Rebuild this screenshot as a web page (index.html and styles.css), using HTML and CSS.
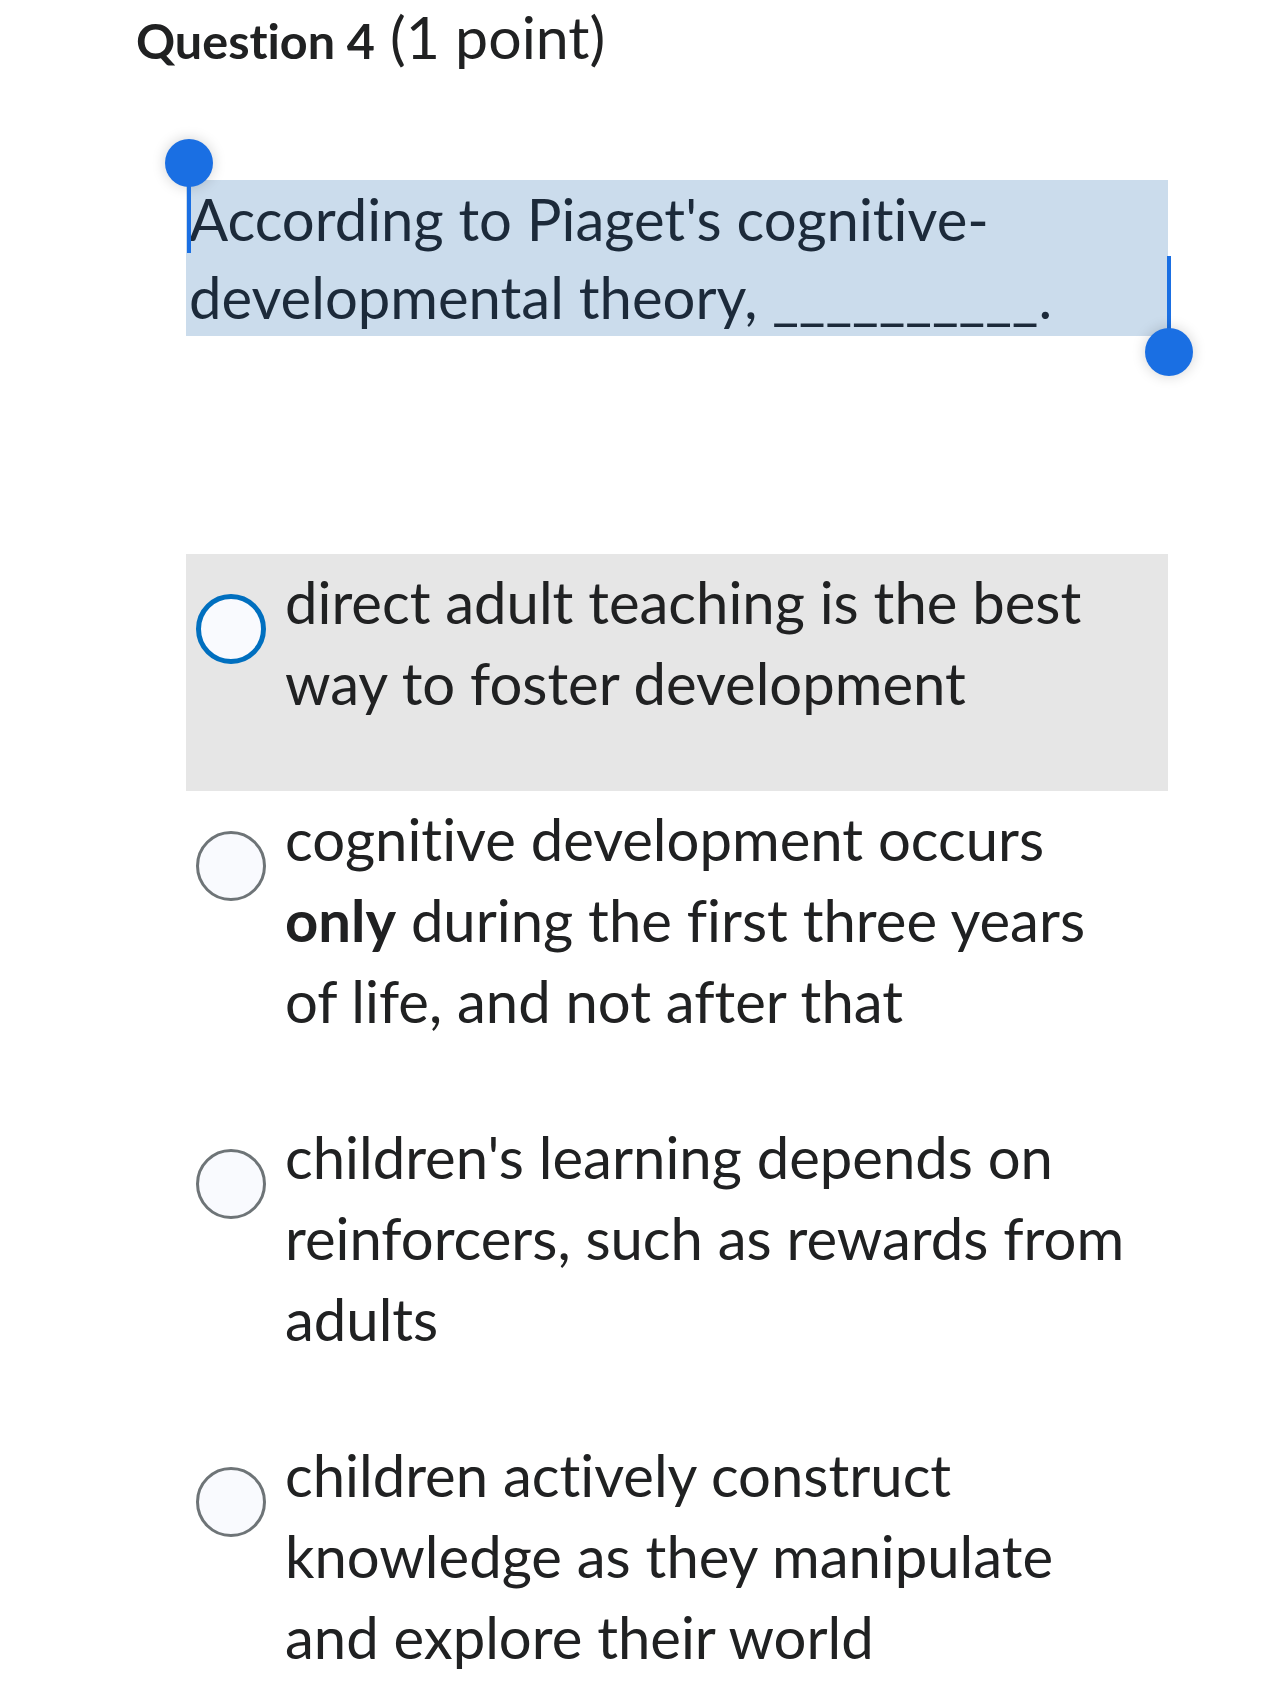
FILE: index.html
```html
<!DOCTYPE html>
<html lang="en">
<head>
<meta charset="utf-8">
<title>Question 4</title>
<link rel="stylesheet" href="styles.css">
</head>
<body>
<div class="page">
  <h1 class="q-title"><span class="q-num">Question 4</span> <span class="q-pts">(1 point)</span></h1>
  <div class="q-body">
    <p class="q-text">According to Piaget's cognitive-developmental theory, __________.</p>
    <span class="handle handle-start"><span class="knob"></span><span class="stem"></span></span>
    <span class="handle handle-end"><span class="stem"></span><span class="knob"></span></span>
  </div>
  <div class="options">
    <label class="option option-hover">
      <span class="radio radio-focus"></span>
      <span class="opt-text">direct adult teaching is the best way to foster development</span>
    </label>
    <label class="option">
      <span class="radio"></span>
      <span class="opt-text">cognitive development occurs <strong>only</strong> during the first three years of life, and not after that</span>
    </label>
    <label class="option">
      <span class="radio"></span>
      <span class="opt-text">children's learning depends on reinforcers, such as rewards from adults</span>
    </label>
    <label class="option">
      <span class="radio"></span>
      <span class="opt-text">children actively construct knowledge as they manipulate and explore their world</span>
    </label>
  </div>
</div>
</body>
</html>
```

FILE: styles.css
```css
* { box-sizing: border-box; }

html, body {
  margin: 0;
  padding: 0;
  background: #ffffff;
}

body {
  font-family: Lato, "Noto Sans", "Liberation Sans", sans-serif;
  color: #202122;
  font-variant-ligatures: none;
}

.page {
  width: 1284px;
  padding: 2px 0 0 0;
}

.q-title {
  margin: 0 0 0 136px;
  font-size: 59px;
  line-height: 70px;
  font-weight: 400;
  color: #202122;
}

.q-num {
  font-size: 48.5px;
  font-weight: 700;
  line-height: 1;
}

.q-pts {
  font-size: 59px;
  font-weight: 400;
  line-height: 1;
}

.q-body {
  position: relative;
  margin: 108px 0 0 186px;
  width: 982px;
}

.q-text {
  margin: 0;
  padding: 0 0 0 3px;
  font-size: 58px;
  line-height: 78px;
  background: #cbdcec;
  color: #1c2a3a;
}

.handle {
  position: absolute;
  display: block;
}

.handle .knob {
  position: absolute;
  width: 48px;
  height: 48px;
  border-radius: 50%;
  background: #1a6fe3;
  box-shadow: 0 0 14px rgba(0, 0, 0, 0.18);
}

.handle .stem {
  position: absolute;
  width: 4px;
  background: #1a6fe3;
}

.handle-start {
  left: -21px;
  top: -41px;
  width: 48px;
  height: 114px;
}

.handle-start .knob { left: 0; top: 0; }
.handle-start .stem { left: 22px; top: 24px; height: 90px; }

.handle-end {
  left: 959px;
  top: 76px;
  width: 48px;
  height: 120px;
}

.handle-end .stem { left: 22px; top: 0; height: 96px; }
.handle-end .knob { left: 0; top: 72px; }

.options {
  margin: 218px 0 0 186px;
  width: 982px;
  display: flex;
  flex-direction: column;
}

.option {
  display: flex;
  align-items: flex-start;
  padding: 7px 24px 68px 10px;
  gap: 19px;
  font-size: 58px;
  line-height: 81px;
  color: #202122;
}

.option-hover {
  background: #e6e6e6;
}

.radio {
  flex: 0 0 70px;
  width: 70px;
  height: 70px;
  margin-top: 33px;
  border-radius: 50%;
  background: #f9fafe;
  border: 3px solid #6e7477;
}

.radio-focus {
  border: 5px solid #006fbf;
}

.opt-text {
  flex: 1 1 auto;
  min-width: 0;
}

.opt-text strong {
  font-weight: 700;
}
```
